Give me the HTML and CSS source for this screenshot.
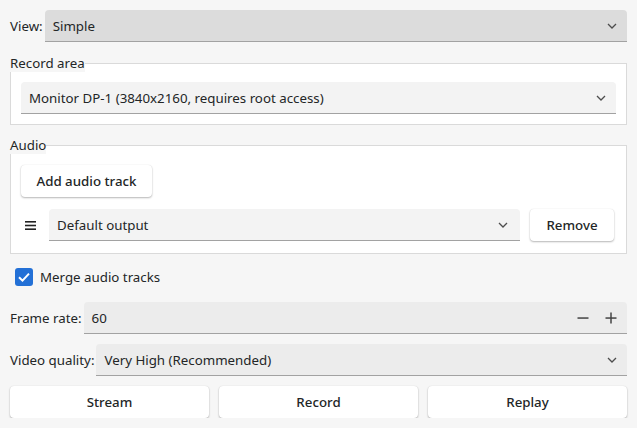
FILE: index.html
```html
<!DOCTYPE html>
<html>
<head>
<meta charset="utf-8">
<link rel="stylesheet" href="styles.css">
</head>
<body>
<div class="app">
  <div class="row view-row">
    <span class="label">View:</span>
    <div class="combo combo-hover">
      <span class="combo-text">Simple</span>
      <svg class="chev" viewBox="0 0 10 6" width="10" height="6"><path d="M1 1 L5 5 L9 1" fill="none" stroke="#4d4d4d" stroke-width="1.3"/></svg>
    </div>
  </div>

  <fieldset class="group group-record">
    <legend>Record area</legend>
    <div class="group-body">
      <div class="combo combo-light">
        <span class="combo-text">Monitor DP-1 (3840x2160, requires root access)</span>
        <svg class="chev" viewBox="0 0 10 6" width="10" height="6"><path d="M1 1 L5 5 L9 1" fill="none" stroke="#4d4d4d" stroke-width="1.3"/></svg>
      </div>
    </div>
  </fieldset>

  <fieldset class="group group-audio">
    <legend>Audio</legend>
    <div class="group-body audio-body">
      <div class="btn-row">
        <button class="btn btn-add">Add audio track</button>
      </div>
      <div class="track-row">
        <div class="handle">
          <svg viewBox="0 0 11 9" width="11" height="9"><rect x="0" y="0" width="11" height="1.6" fill="#222"/><rect x="0" y="3.7" width="11" height="1.6" fill="#222"/><rect x="0" y="7.4" width="11" height="1.6" fill="#222"/></svg>
        </div>
        <div class="combo combo-light track-combo">
          <span class="combo-text">Default output</span>
          <svg class="chev" viewBox="0 0 10 6" width="10" height="6"><path d="M1 1 L5 5 L9 1" fill="none" stroke="#4d4d4d" stroke-width="1.3"/></svg>
        </div>
        <button class="btn btn-remove">Remove</button>
      </div>
    </div>
  </fieldset>

  <div class="row check-row">
    <span class="checkbox">
      <svg viewBox="0 0 18 18" width="18" height="18"><path d="M4 9.2 L7.5 12.6 L14 5.6" fill="none" stroke="#fff" stroke-width="2"/></svg>
    </span>
    <span class="check-label">Merge audio tracks</span>
  </div>

  <div class="row field-row">
    <span class="label">Frame rate:</span>
    <div class="combo combo-mid spin">
      <span class="combo-text">60</span>
      <span class="spin-btns">
        <svg viewBox="0 0 12 12" width="12" height="12"><rect x="0.5" y="5.3" width="11" height="1.5" fill="#444"/></svg>
        <svg viewBox="0 0 12 12" width="12" height="12"><rect x="0.5" y="5.3" width="11" height="1.5" fill="#444"/><rect x="5.25" y="0.5" width="1.5" height="11" fill="#444"/></svg>
      </span>
    </div>
  </div>

  <div class="row field-row quality-row">
    <span class="label">Video quality:</span>
    <div class="combo combo-mid">
      <span class="combo-text">Very High (Recommended)</span>
      <svg class="chev" viewBox="0 0 10 6" width="10" height="6"><path d="M1 1 L5 5 L9 1" fill="none" stroke="#4d4d4d" stroke-width="1.3"/></svg>
    </div>
  </div>

  <div class="actions">
    <button class="btn act">Stream</button>
    <button class="btn act">Record</button>
    <button class="btn act">Replay</button>
  </div>
</div>
</body>
</html>
```

FILE: styles.css
```css
html, body {
  margin: 0;
  padding: 0;
  background: #f6f6f6;
}
body {
  font-family: "Noto Sans", "Open Sans", sans-serif;
  font-size: 13.3px;
  line-height: 18px;
  color: #232627;
}
.app {
  display: flex;
  flex-direction: column;
  padding: 10px 10px 0 10px;
}
.row {
  display: flex;
  align-items: center;
}
.label {
  margin-right: 2px;
  white-space: nowrap;
}
.combo {
  flex: 1;
  display: flex;
  align-items: center;
  justify-content: space-between;
  height: 31px;
  border-bottom: 1px solid #a2a2a2;
  border-radius: 4px 4px 0 0;
  padding: 0 10px 0 8px;
  box-sizing: content-box;
}
.combo-hover { background: #dcdcdc; }
.combo-light { background: #f3f3f3; }
.combo-mid { background: #ececec; }
.combo-text { white-space: nowrap; }
.chev { flex: none; margin-top: 1px; }

.group {
  margin: 12px 0 0 0;
  padding: 0;
  border: 1px solid #dadada;
  background: #fff;
  min-width: 0;
}
.group legend {
  padding: 0;
  margin-left: -1px;
  line-height: 18px;
  background: #f6f6f6;
}
.group-body {
  padding: 10px 10px 10px 10px;
}
.group-audio { margin-top: 11px; }
.audio-body {
  display: flex;
  flex-direction: column;
  gap: 12px;
  padding-top: 11px;
  padding-bottom: 12px;
}
.btn-row { display: flex; }
.btn {
  font-family: inherit;
  font-size: 13.3px;
  font-weight: 500;
  color: #232627;
  background: #fff;
  border: none;
  border-radius: 4px;
  box-shadow: 0 1px 2px rgba(0,0,0,0.28), 0 0 1px rgba(0,0,0,0.12);
  height: 32px;
  padding: 0 14px;
}
.btn-add { width: 131px; }
.track-row {
  display: flex;
  align-items: center;
  gap: 10px;
}
.handle {
  width: 18px;
  display: flex;
  justify-content: center;
}
.track-combo { padding-right: 12px; }
.btn-remove { width: 84px; margin-right: 2px; }

.check-row { margin-top: 14px; padding-left: 5px; height: 18px; }
.checkbox {
  width: 18px;
  height: 18px;
  border-radius: 3px;
  background: #2370d6;
  display: inline-flex;
}
.check-label { margin-left: 7px; }

.field-row { margin-top: 16px; }
.quality-row { margin-top: 10px; }
.spin-btns {
  display: flex;
  gap: 16px;
  margin-right: 0;
}
.actions {
  display: flex;
  gap: 10px;
  margin-top: 10px;
}
.act { flex: 1; }
```
